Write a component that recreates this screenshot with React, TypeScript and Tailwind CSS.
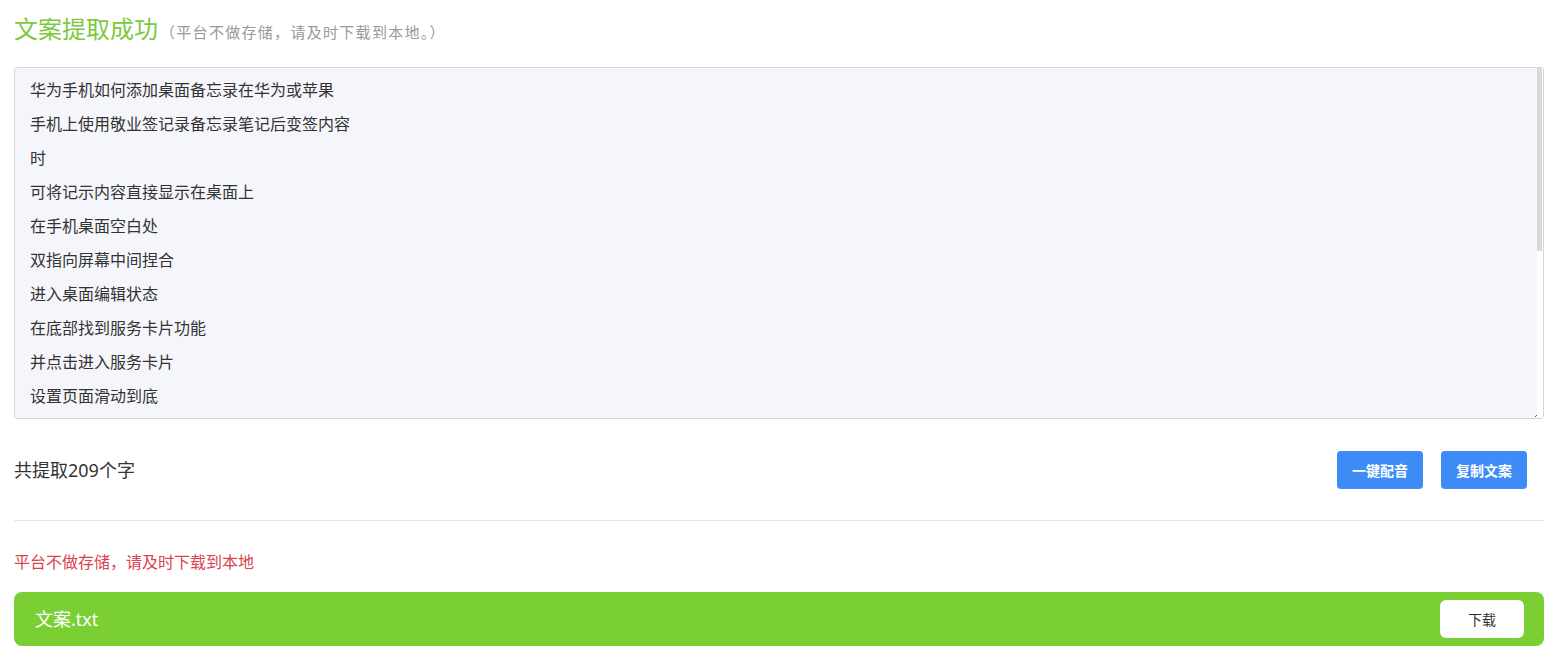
const lines = [
  '华为手机如何添加桌面备忘录在华为或苹果',
  '手机上使用敬业签记录备忘录笔记后变签内容',
  '时',
  '可将记示内容直接显示在桌面上',
  '在手机桌面空白处',
  '双指向屏幕中间捏合',
  '进入桌面编辑状态',
  '在底部找到服务卡片功能',
  '并点击进入服务卡片',
  '设置页面滑动到底',
  '找到敬业签卡片',
  '选择合适的卡片样式',
  '点击添加到桌面',
  '即可将备忘录内容显示在桌面',
  '苹果手机长按桌面空白处',
  '点击左上角加号',
  '搜索敬业签',
  '选择小组件尺寸',
  '点击添加小组件',
  '完成后内容即可显示在桌面上',
];

export default function App() {
  return (
    <div className="min-h-[662px] bg-white pl-[14px] pr-[8px] pt-[12px] font-['Noto_Sans','Noto_Sans_CJK_SC',sans-serif] text-[#333]">
      <div className="flex items-baseline">
        <h1 className="text-[24px] leading-[34px] text-[#7cc93f]">文案提取成功</h1>
        <span className="ml-[2px] text-[15px] tracking-[1.3px] text-[#999]">（平台不做存储，请及时下载到本地。）</span>
      </div>

      <div className="relative mt-[21px]">
        <textarea
          readOnly
          value={lines.join('\n')}
          className="block h-[352px] w-full resize-y rounded-[3px] border border-[#d4d6db] bg-[#f5f6fb] pl-[15px] pr-[10px] pt-[5px] text-[16px] leading-[34px] text-[#333] outline-none"
        />
        {/* scrollbar thumb */}
        <div className="absolute right-[1px] top-[1px] h-[350px] w-[6px] bg-white">
          <div className="h-[183px] w-[5px] bg-[#dadada]" />
        </div>
      </div>

      <div className="flex items-center justify-between pt-[32px] pb-[31px]">
        <span className="text-[18px] text-[#333]">共提取209个字</span>
        <div className="mr-[17px] flex gap-[18px]">
          <button className="h-[38px] w-[86px] rounded-[4px] bg-[#3f8cf6] text-[14px] font-bold text-white">一键配音</button>
          <button className="h-[38px] w-[86px] rounded-[4px] bg-[#3f8cf6] text-[14px] font-bold text-white">复制文案</button>
        </div>
      </div>

      <div className="h-px w-full bg-[#e6e6e6]" />

      <p className="mt-[30px] text-[16px] leading-[22px] text-[#d9434e]">平台不做存储，请及时下载到本地</p>

      <div className="mt-[19px] flex h-[54px] items-center justify-between rounded-[8px] bg-[#7acf33] pl-[21px] pr-[20px]">
        <span className="text-[18px] text-white">文案.txt</span>
        <button className="h-[38px] w-[84px] rounded-[6px] bg-white text-[14px] text-[#333]">下载</button>
      </div>
    </div>
  );
}
